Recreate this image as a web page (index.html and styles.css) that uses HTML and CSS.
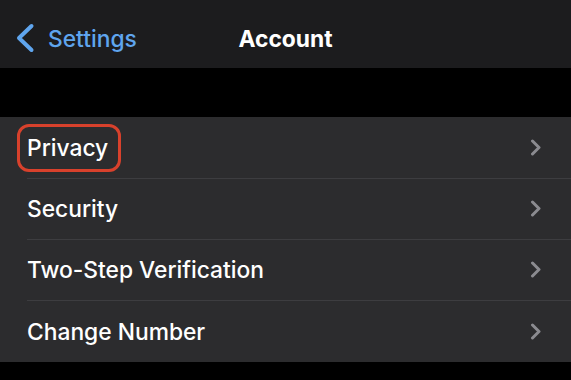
FILE: index.html
```html
<!DOCTYPE html>
<html>
<head>
<meta charset="utf-8">
<link rel="stylesheet" href="styles.css">
</head>
<body>
<div class="nav">
  <div class="back">
    <svg class="back-icon" width="20" height="30" viewBox="0 0 20 30"><path d="M16.5 3 L4 15 L16.5 27" fill="none" stroke="#5fa5ee" stroke-width="4" stroke-linecap="round" stroke-linejoin="round"/></svg>
    <span class="back-label">Settings</span>
  </div>
  <div class="title">Account</div>
</div>
<div class="gap"></div>
<ul class="list">
  <li class="row"><span class="label highlight">Privacy</span><svg class="chev" width="12" height="17" viewBox="0 0 12 17"><path d="M2.5 2 L9 8.5 L2.5 15" fill="none" stroke="#8b8b90" stroke-width="3" stroke-linecap="round" stroke-linejoin="round"/></svg></li>
  <li class="row"><span class="label">Security</span><svg class="chev" width="12" height="17" viewBox="0 0 12 17"><path d="M2.5 2 L9 8.5 L2.5 15" fill="none" stroke="#8b8b90" stroke-width="3" stroke-linecap="round" stroke-linejoin="round"/></svg></li>
  <li class="row"><span class="label">Two-Step Verification</span><svg class="chev" width="12" height="17" viewBox="0 0 12 17"><path d="M2.5 2 L9 8.5 L2.5 15" fill="none" stroke="#8b8b90" stroke-width="3" stroke-linecap="round" stroke-linejoin="round"/></svg></li>
  <li class="row last"><span class="label">Change Number</span><svg class="chev" width="12" height="17" viewBox="0 0 12 17"><path d="M2.5 2 L9 8.5 L2.5 15" fill="none" stroke="#8b8b90" stroke-width="3" stroke-linecap="round" stroke-linejoin="round"/></svg></li>
</ul>
</body>
</html>
```
FILE: styles.css
```css
html, body {
  margin: 0;
  padding: 0;
  background: #000;
  font-family: Inter, "Noto Sans", sans-serif;
  width: 571px;
  height: 380px;
  overflow: hidden;
}
.nav {
  height: 68px;
  background: #1c1c1e;
  display: flex;
  align-items: center;
  position: relative;
}
.back {
  display: flex;
  align-items: center;
  padding-left: 15px;
  gap: 13px;
  color: #5fa5ee;
  font-size: 22.8px;
  font-weight: 500;
  margin-top: 8px;
}
.title {
  position: absolute;
  left: 0;
  right: 0;
  top: 38px;
  text-align: center;
  color: #fff;
  font-size: 22.8px;
  font-weight: 700;
  transform: translate(0, -50%);
}
.gap {
  height: 49px;
}
.list {
  list-style: none;
  margin: 0;
  padding: 0;
  background: #2c2c2e;
}
.row {
  height: 61px;
  display: flex;
  align-items: center;
  justify-content: space-between;
  padding-left: 27px;
  padding-right: 29px;
  position: relative;
  color: #fff;
  font-size: 22.8px;
  font-weight: 500;
}
.row.last {
  height: 62px;
}
.row + .row::before {
  content: "";
  position: absolute;
  left: 27px;
  right: 0;
  top: 0;
  height: 1px;
  background: #3d3d40;
}
.label.highlight {
  position: relative;
}
.label.highlight::after {
  content: "";
  position: absolute;
  left: -10px;
  right: -13px;
  top: -10px;
  bottom: -11px;
  border: 3px solid #d8412c;
  border-radius: 12px;
}
```
